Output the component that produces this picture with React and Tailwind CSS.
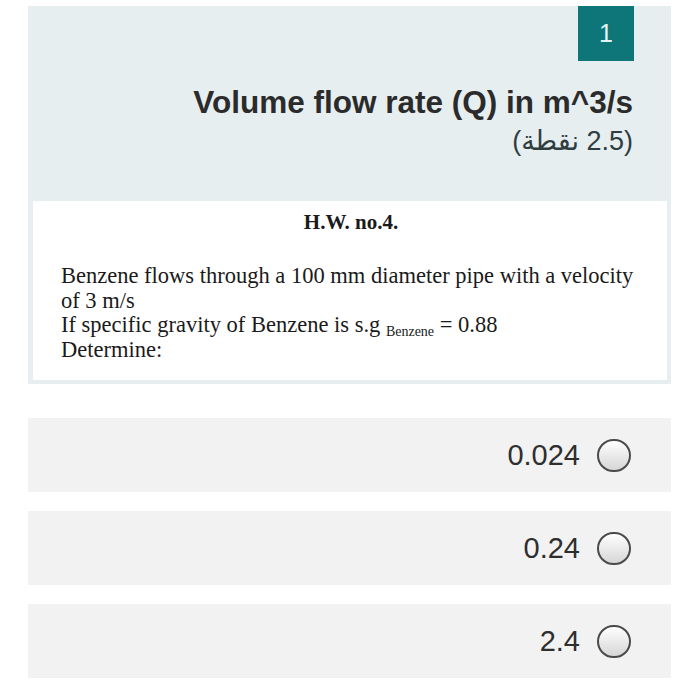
import React from "react";

const options = ["0.024", "0.24", "2.4"];

const Radio = () => (
  <span className="w-[34px] h-[33px] rounded-full border-2 border-[#4a4a4a] bg-gradient-to-b from-white to-[#d6d6d6] shrink-0" />
);

const Option = ({ label }) => (
  <label className="h-[74px] bg-[#f2f2f2] flex items-center justify-end pr-[40px] gap-[17px] cursor-pointer">
    <span className="text-[29px] leading-none text-[#2e2e2e]">{label}</span>
    <Radio />
  </label>
);

export default function App() {
  return (
    <div className="w-[700px] h-[683px] bg-white overflow-hidden font-['Liberation_Sans',Arial,sans-serif]">
      {/* Question header */}
      <div className="ml-[28px] mr-[29px] mt-[6px] bg-[#e6eef0] pb-[4px]">
        <div className="flex justify-end pr-[37px]">
          <div className="w-[56px] h-[55px] bg-[#0e7678] flex items-center justify-center text-[25px] text-[#e3f6f3]">
            1
          </div>
        </div>

        <h2 className="mt-[23px] pr-[38px] text-right text-[31.5px] leading-[36px] font-bold text-[#2b2b2b]">
          Volume flow rate (Q) in m^3/s
        </h2>
        <p
          dir="rtl"
          className="mt-[3px] pr-[38px] text-right text-[27px] leading-[36px] text-[#2f3d41] font-['Liberation_Sans','DejaVu_Sans',sans-serif]"
        >
          (2.5 نقطة)
        </p>

        {/* Problem box */}
        <div className="mt-[42px] ml-[5px] mr-[4px] bg-white pt-[9px] pb-[18px] pl-[28px] pr-[26px] font-['Liberation_Serif','Times_New_Roman',serif] text-[#1a1a1a]">
          <p className="text-center text-[21px] leading-[24px] font-bold">H.W. no.4.</p>
          <div className="mt-[30px] text-[22.5px] leading-[24.5px]">
            <p>Benzene flows through a 100 mm diameter pipe with a velocity of 3 m/s</p>
            <p>
              If specific gravity of Benzene is s.g{" "}
              <span className="text-[14px] leading-none relative top-[4px]">Benzene</span> = 0.88
            </p>
            <p>Determine:</p>
          </div>
        </div>
      </div>

      {/* Answers */}
      <div className="ml-[28px] mr-[29px] mt-[34px] flex flex-col gap-[19px]">
        {options.map((o) => (
          <Option key={o} label={o} />
        ))}
      </div>
    </div>
  );
}
